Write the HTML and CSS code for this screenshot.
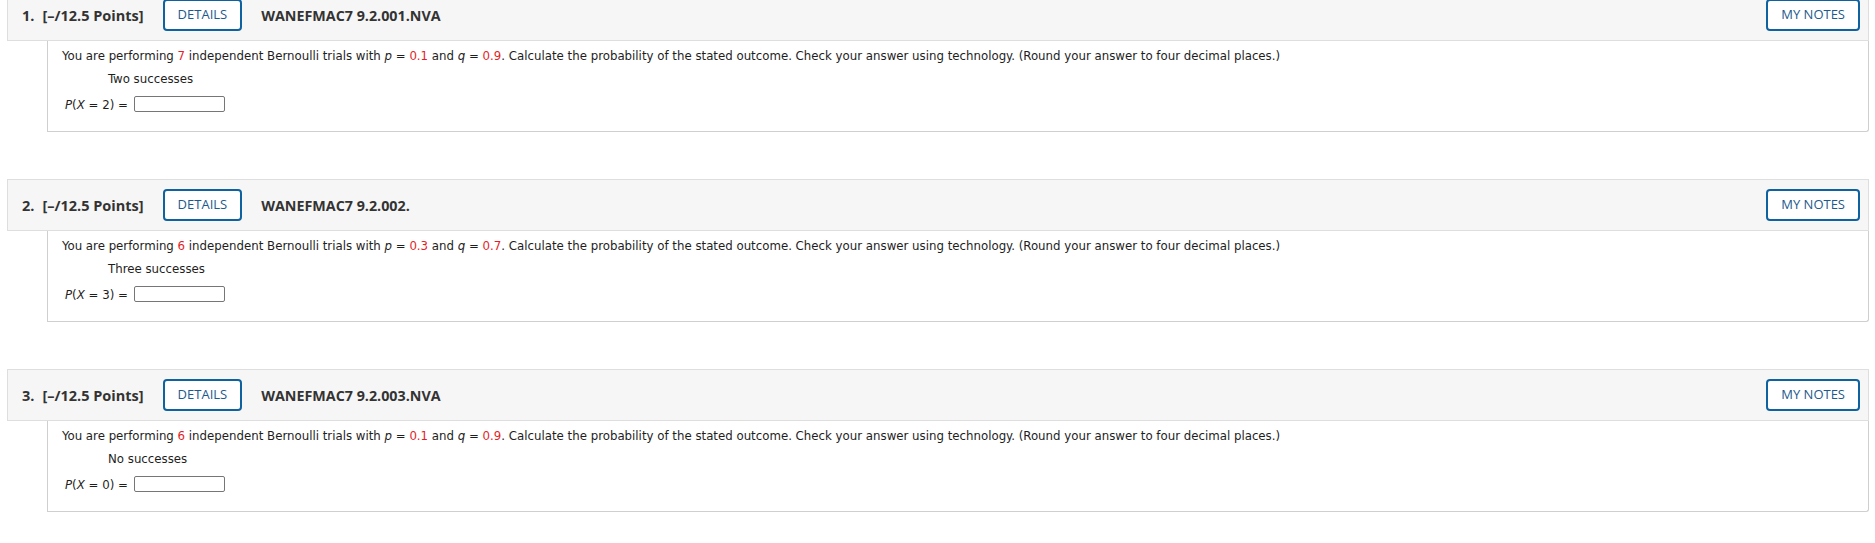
FILE: index.html
```html
<!DOCTYPE html>
<html>
<head>
<meta charset="utf-8">
<link rel="stylesheet" href="styles.css">
</head>
<body>
<div class="page">
  <div class="question">
    <div class="qhead">
      <span class="qnum">1.</span>
      <span class="qpts">[–/12.5 Points]</span>
      <button class="btn">DETAILS</button>
      <span class="qid">WANEFMAC7 9.2.001.NVA</span>
      <button class="btn notes">MY NOTES</button>
    </div>
    <div class="qbody">
      <p class="prompt">You are performing <span class="red">7</span> independent Bernoulli trials with <i>p</i> = <span class="red">0.1</span> and <i>q</i> = <span class="red">0.9</span>. Calculate the probability of the stated outcome. Check your answer using technology. (Round your answer to four decimal places.)</p>
      <p class="outcome">Two successes</p>
      <div class="answer"><span class="expr"><i>P</i>(<i>X</i> = 2) = </span><span class="box"></span></div>
    </div>
  </div>

  <div class="question">
    <div class="qhead">
      <span class="qnum">2.</span>
      <span class="qpts">[–/12.5 Points]</span>
      <button class="btn">DETAILS</button>
      <span class="qid">WANEFMAC7 9.2.002.</span>
      <button class="btn notes">MY NOTES</button>
    </div>
    <div class="qbody">
      <p class="prompt">You are performing <span class="red">6</span> independent Bernoulli trials with <i>p</i> = <span class="red">0.3</span> and <i>q</i> = <span class="red">0.7</span>. Calculate the probability of the stated outcome. Check your answer using technology. (Round your answer to four decimal places.)</p>
      <p class="outcome">Three successes</p>
      <div class="answer"><span class="expr"><i>P</i>(<i>X</i> = 3) = </span><span class="box"></span></div>
    </div>
  </div>

  <div class="question">
    <div class="qhead">
      <span class="qnum">3.</span>
      <span class="qpts">[–/12.5 Points]</span>
      <button class="btn">DETAILS</button>
      <span class="qid">WANEFMAC7 9.2.003.NVA</span>
      <button class="btn notes">MY NOTES</button>
    </div>
    <div class="qbody">
      <p class="prompt">You are performing <span class="red">6</span> independent Bernoulli trials with <i>p</i> = <span class="red">0.1</span> and <i>q</i> = <span class="red">0.9</span>. Calculate the probability of the stated outcome. Check your answer using technology. (Round your answer to four decimal places.)</p>
      <p class="outcome">No successes</p>
      <div class="answer"><span class="expr"><i>P</i>(<i>X</i> = 0) = </span><span class="box"></span></div>
    </div>
  </div>
</div>
</body>
</html>
```

FILE: styles.css
```css
html, body {
  margin: 0;
  padding: 0;
  background: #fff;
}

.page {
  margin-top: -11px;
  padding: 0 6px 0 7px;
}

.question {
  margin-bottom: 47px;
}

.qhead {
  display: flex;
  align-items: center;
  height: 50px;
  padding: 0 8px 0 14px;
  background: #f6f6f6;
  border: 1px solid #dedede;
  font-family: "Open Sans", "Noto Sans", sans-serif;
  font-weight: 700;
  font-size: 14.5px;
  color: #333;
}

.qnum {
  margin-right: 8px;
}

.qpts {
  margin-right: 19px;
}

.btn {
  height: 32px;
  box-sizing: border-box;
  padding: 0 13px 2px;
  border: 2px solid #0f62a0;
  border-radius: 4px;
  background: #fff;
  color: #1b5a8c;
  font-family: "Open Sans", "Noto Sans", sans-serif;
  font-size: 13px;
  font-weight: 400;
  margin-right: 19px;
}

.btn.notes {
  margin-left: auto;
  margin-right: 0;
}

.qid {
  font-size: 14.3px;
}

.qbody {
  margin-left: 40px;
  border: 1px solid #cfcfcf;
  border-top: none;
  border-bottom-right-radius: 3px;
  padding: 6px 14px 17px;
  font-family: "DejaVu Sans Condensed", "Liberation Sans", sans-serif;
  font-size: 13.1px;
  color: #1e1e1e;
}

.prompt {
  margin: 0;
  line-height: 18px;
}

.outcome {
  margin: 5px 0 0 46px;
  line-height: 18px;
}

.answer {
  margin: 6px 0 0 3px;
  height: 20px;
  display: flex;
  align-items: center;
}

.expr {
  white-space: pre;
  margin-right: 2px;
}

.box {
  display: inline-block;
  width: 89px;
  height: 14px;
  border: 1px solid #767676;
  border-radius: 2px;
  background: #fff;
}

.red {
  color: #e41e26;
}

i {
  font-style: italic;
}
```
